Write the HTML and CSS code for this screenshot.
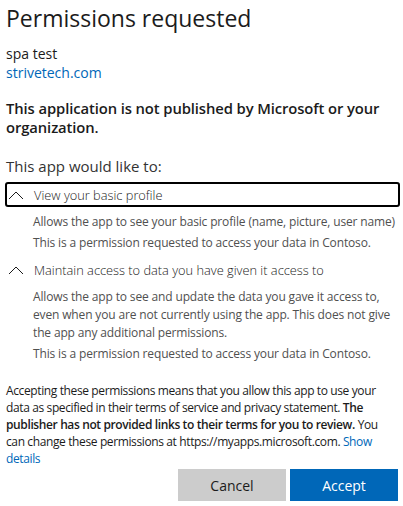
FILE: index.html
```html
<!DOCTYPE html>
<html lang="en">
<head>
<meta charset="utf-8">
<title>Permissions requested</title>
<link rel="stylesheet" href="styles.css">
</head>
<body>
<main class="dialog">
  <h1 class="title">Permissions requested</h1>
  <div class="app-name">spa test</div>
  <a class="app-domain" href="#">strivetech.com</a>
  <p class="warning">This application is not published by Microsoft or your organization.</p>
  <p class="intro">This app would like to:</p>
  <ul class="perms">
    <li class="perm">
      <button class="perm-head focused">
        <svg class="chev" viewBox="0 0 16 10" width="16" height="10"><path d="M1 9 L8 2 L15 9" fill="none" stroke="#1b1b1b" stroke-width="1"/></svg>
        <span>View your basic profile</span>
      </button>
      <div class="perm-body">
        <p>Allows the app to see your basic profile (name, picture, user name)</p>
        <p>This is a permission requested to access your data in Contoso.</p>
      </div>
    </li>
    <li class="perm">
      <button class="perm-head">
        <svg class="chev" viewBox="0 0 16 10" width="16" height="10"><path d="M1 9 L8 2 L15 9" fill="none" stroke="#1b1b1b" stroke-width="1"/></svg>
        <span>Maintain access to data you have given it access to</span>
      </button>
      <div class="perm-body">
        <p>Allows the app to see and update the data you gave it access to, even when you are not currently using the app. This does not give the app any additional permissions.</p>
        <p>This is a permission requested to access your data in Contoso.</p>
      </div>
    </li>
  </ul>
  <p class="legal">Accepting these permissions means that you allow this app to use your data as specified in their terms of service and privacy statement. <b>The publisher has not provided links to their terms for you to review.</b> You can change these permissions at https://myapps.microsoft.com. <a href="#">Show details</a></p>
  <div class="actions">
    <button class="btn btn-cancel">Cancel</button>
    <button class="btn btn-accept">Accept</button>
  </div>
</main>
</body>
</html>
```
FILE: styles.css
```css
html, body {
  margin: 0;
  padding: 0;
  background: #fff;
}
body {
  font-family: "Segoe UI", "Open Sans", "Noto Sans", sans-serif;
  color: #1b1b1b;
}
.dialog {
  width: 392px;
  padding: 0 5px 0 6px;
}
.title {
  margin: 0;
  padding-top: 3px;
  font-size: 23px;
  font-weight: 400;
  line-height: 30px;
}
.app-name {
  margin-top: 11px;
  font-size: 14px;
  line-height: 19px;
}
.app-domain {
  display: block;
  font-size: 14px;
  line-height: 19px;
  color: #0067b8;
  text-decoration: none;
}
.warning {
  margin: 17px 0 0;
  font-size: 14.8px;
  font-weight: 600;
  line-height: 19px;
  letter-spacing: -0.1px;
}
.intro {
  margin: 20px 0 0;
  font-size: 15px;
  font-weight: 400;
  line-height: 19px;
  color: #333;
}
.perms {
  list-style: none;
  margin: 6px 0 0;
  padding: 0;
}
.perm-head {
  display: flex;
  align-items: center;
  gap: 10px;
  width: 390px;
  height: 21px;
  margin: 0 0 0 -1px;
  padding: 0 0 0 1px;
  border: 2px solid transparent;
  border-radius: 3px;
  background: none;
  font-family: inherit;
  font-size: 12.8px;
  font-weight: 300;
  color: #1b1b1b;
  text-align: left;
  box-sizing: content-box;
}
.perm-head.focused {
  border-color: #000;
}
.chev {
  flex: none;
  margin-top: 1px;
}
.perm-body {
  padding: 6px 0 0 27px;
}
.perm-body p {
  margin: 0 0 3px;
  font-size: 12px;
  font-weight: 400;
  line-height: 18px;
  letter-spacing: -0.15px;
  color: #505050;
}
.perm-body p:last-child {
  margin-bottom: 0;
}
.perm + .perm {
  margin-top: 5px;
}
.legal {
  margin: 19px 0 0;
  font-size: 12px;
  line-height: 17px;
  letter-spacing: -0.38px;
  color: #1b1b1b;
}
.legal b {
  font-weight: 600;
}
.legal a {
  color: #0067b8;
  text-decoration: none;
}
.actions {
  display: flex;
  justify-content: flex-end;
  gap: 4px;
  margin-top: 2px;
}
.btn {
  width: 108px;
  height: 32px;
  border: none;
  font-family: inherit;
  font-size: 14px;
}
.btn-cancel {
  background: #cccccc;
  color: #1b1b1b;
}
.btn-accept {
  background: #0067b8;
  color: #fff;
}
```
